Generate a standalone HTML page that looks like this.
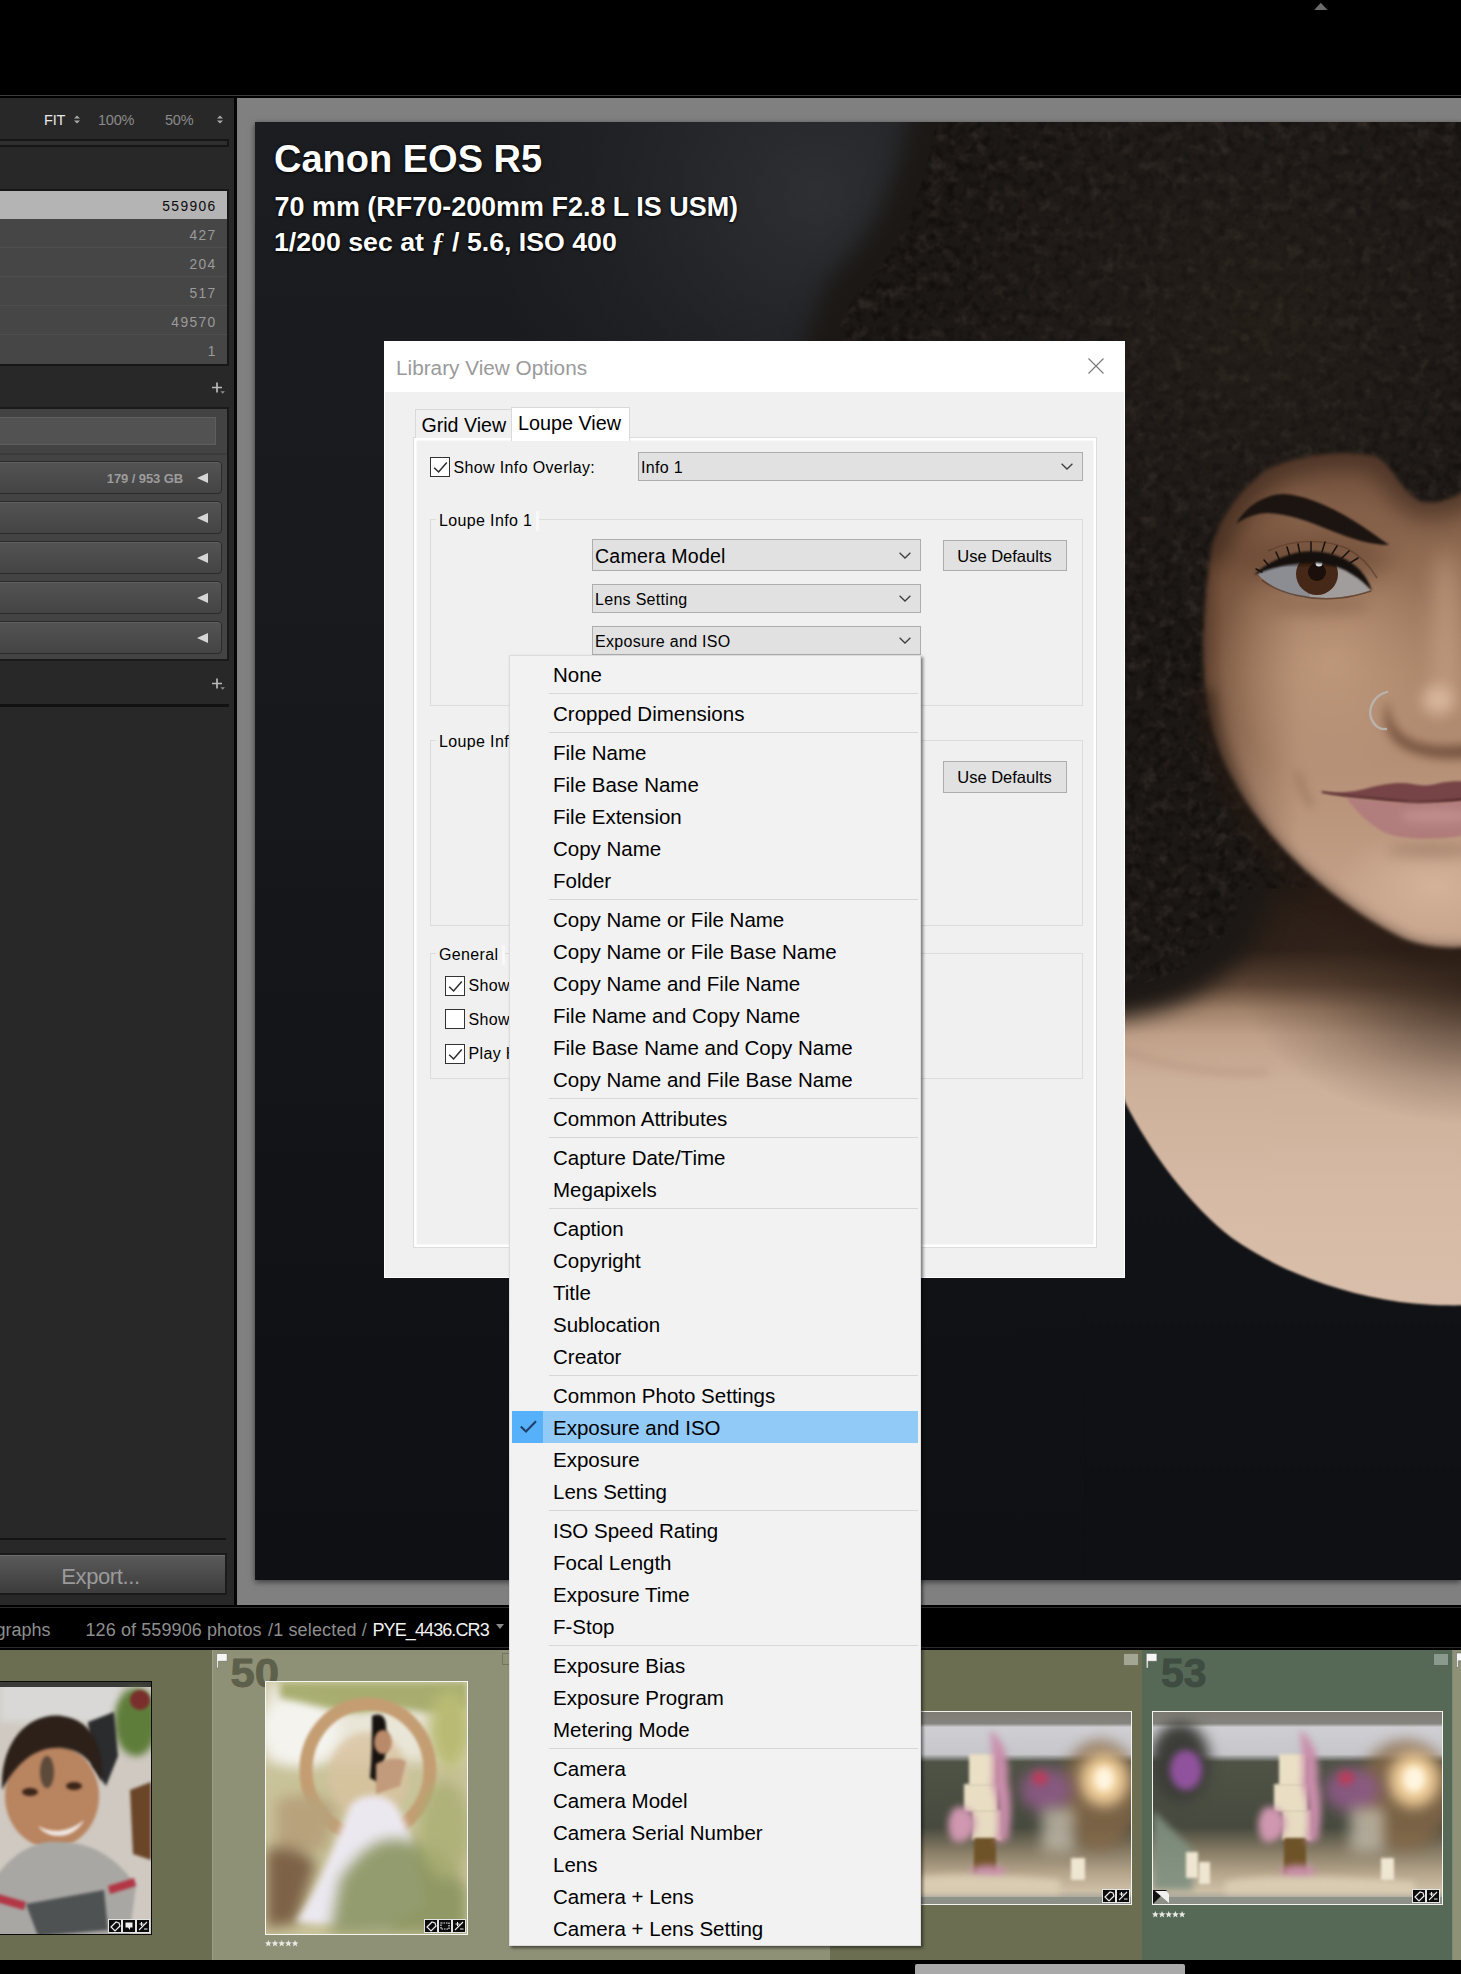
<!DOCTYPE html>
<html>
<head>
<meta charset="utf-8">
<title>Library View Options</title>
<style>
*{box-sizing:border-box;margin:0;padding:0}
html,body{width:1461px;height:1974px;overflow:hidden;background:#000}
body{position:relative;font-family:"Liberation Sans",sans-serif;color:#000}
.abs{position:absolute}
#app{position:absolute;left:0;top:0;width:1461px;height:1974px;overflow:hidden;background:#000}

/* ---------- top bar ---------- */
#topline{left:0;top:95px;width:1461px;height:1px;background:#3c3c3c}

/* ---------- left panel ---------- */
#left{left:0;top:98px;width:234px;height:1507px;background:#282828}
#leftedge{left:234px;top:98px;width:3px;height:1507px;background:#050505}
.zoomtxt{top:14px;font-size:14.5px;color:#8a8a8a;line-height:16px;letter-spacing:-.2px}
.spin{width:6px;height:9px}
#zbar{left:-2px;top:41px;width:231px;height:8px;border:2px solid #161616;background:#2e2e2e}
#catlist{left:-2px;top:91px;width:231px;height:177px;border:2px solid #171717;background:#464646}
.row{position:absolute;left:0;width:227px;height:28px;background:#464646;color:#9b9b9b;font-size:13.8px;line-height:31px;text-align:right;padding-right:10.3px;letter-spacing:1.4px;border-bottom:1px solid #4e4e4e;overflow:hidden}
.row.cur{background:#b4b4b4;color:#0a0a0a;border-bottom-color:#b4b4b4}
.plus{width:14px;height:14px}
#pan2{left:-2px;top:309px;width:231px;height:254px;border:2px solid #1a1a1a;background:#434343}
#search{left:-2px;top:8px;width:218px;height:28px;background:#525252;border:1px solid #5e5e5e}
#pan2sep{left:0;top:44px;width:227px;height:2px;background:#3b3b3b}
.vol{position:absolute;left:-6px;width:228px;height:33px;border:1px solid #2b2b2b;border-radius:4px;background:linear-gradient(#535353,#444);box-shadow:inset 0 1px 0 #606060}
.vol i{position:absolute;right:13px;top:11px;width:0;height:0;border-top:5.5px solid transparent;border-bottom:5.5px solid transparent;border-right:11px solid #d6d6d6}
.vol b{position:absolute;right:38px;top:9px;font-size:13px;line-height:15px;color:#9c9c9c;font-weight:700;letter-spacing:-.1px}
#line704{left:0;top:606px;width:229px;height:3px;background:#111}
#line1539{left:0;top:1440px;width:226px;height:2px;background:#141414}
#export{left:-2px;top:1455px;width:229px;height:42px;border:2px solid #1b1b1b;background:linear-gradient(#5a5a5a,#3c3c3c);color:#9a9a9a;font-size:22px;letter-spacing:-.4px;line-height:43px;text-align:center;padding-right:24px;box-shadow:inset 0 1px 0 #6c6c6c;overflow:hidden}

/* ---------- loupe area ---------- */
#gray{left:237px;top:98px;width:1224px;height:1507px;background:#808080}
#photo{left:255px;top:122px;width:1206px;height:1458px;background:#1a1b1d;overflow:hidden;box-shadow:0 2px 6px rgba(0,0,0,.55)}
.ov{position:absolute;left:20px;color:#fff;font-weight:700;white-space:nowrap;text-shadow:0 1px 3px rgba(0,0,0,.9),0 0 2px rgba(0,0,0,.8)}

/* ---------- bottom ---------- */
#infobar{left:0;top:1605px;width:1461px;height:45px;background:#000;color:#8e8e8e;font-size:18px;line-height:22px;white-space:nowrap}
#film{left:0;top:1650px;width:1461px;height:310px;background:#6f7158;overflow:hidden}
#thumbbar{left:915px;top:1964px;width:270px;height:12px;background:#a9a9a9;border-radius:2px 2px 0 0}

/* ---------- dialog ---------- */
#dlg{left:384px;top:341px;width:741px;height:937px;background:#f0f0f0;box-shadow:inset 0 0 0 1px #fff;font-size:16px;overflow:hidden}
#dlg .tbar{left:0;top:0;width:741px;height:51px;background:#fff}
#dlg .ttl{left:12px;top:12.5px;font-size:20.75px;line-height:28px;color:#9a9a9a;white-space:nowrap}
.tab{position:absolute;border:1px solid #d9d9d9;border-bottom:0;font-size:19.6px;line-height:24px;white-space:nowrap}
#tabpanel{left:29px;top:96px;width:684px;height:811px;border:1px solid #dcdcdc;box-shadow:inset 0 0 0 2.5px #fff;background:#f0f0f0}
.cb{position:absolute;width:20px;height:20px;border:1px solid #333;background:#fff}
.cb svg{position:absolute;left:0;top:0;width:18px;height:18px}
.lbl{position:absolute;font-size:16px;line-height:20px;white-space:nowrap;color:#000;letter-spacing:.36px}
.sel{position:absolute;background:#e1e1e1;border:1px solid #adadad;font-size:16px;white-space:nowrap;padding-left:2.5px;color:#000;letter-spacing:.3px}
.sel svg{position:absolute;right:9px;top:50%;margin-top:-3px;width:12px;height:7px}
.grp{position:absolute;border:1px solid #dcdcdc}
.grp>span{position:absolute;left:5px;top:-9px;padding:0 4px 0 3px;background:#f0f0f0;font-size:16px;line-height:20px;white-space:nowrap;box-shadow:3px 0 0 #f8f8f8;letter-spacing:.36px}
.btn{position:absolute;background:#e1e1e1;border:1px solid #adadad;font-size:16.5px;text-align:center;white-space:nowrap}

/* ---------- menu ---------- */
#menu{left:509px;top:655px;width:412px;height:1291px;background:#f2f2f2;border:1px solid #dcdcdc;padding:3px 2px;box-shadow:2px 2px 3px rgba(0,0,0,.5);font-size:20.5px;color:#000}
.mi{position:relative;height:32px;line-height:32.4px;padding-left:41px;white-space:nowrap;overflow:hidden}
.mi.on{overflow:visible;z-index:1}
.mi.on u{position:absolute;left:0;top:-.8px;width:406px;height:31.4px;background:linear-gradient(90deg,#56b0fa 0,#56b0fa 31px,#91c9f7 31px);z-index:-1}
.mi.on svg{position:absolute;left:8px;top:8px;width:17px;height:14px}
#menu hr{border:0;height:1px;background:#d7d7d7;margin:2px 0 4px 37px}
</style>
</head>
<body>
<div id="app">

<!-- top bar -->
<div class="abs" id="topline"></div>
<svg class="abs" style="left:1313px;top:2px" width="16" height="9" viewBox="0 0 16 9"><path d="M1.2 7.9 L7.8 0.7 L14.6 7.9Z" fill="#6c6c6c"/></svg>

<!-- loupe area -->
<div class="abs" id="gray"></div>
<div class="abs" id="photo">
<!--PHOTO-START--><svg class="abs" style="left:0;top:0" width="1206" height="1458" viewBox="255 122 1206 1458" preserveAspectRatio="none">
<defs>
  <linearGradient id="bgv" x1="0" y1="122" x2="0" y2="1580" gradientUnits="userSpaceOnUse">
    <stop offset="0" stop-color="#1c1d20"/><stop offset=".45" stop-color="#17181b"/><stop offset=".8" stop-color="#111215"/><stop offset="1" stop-color="#0f1013"/>
  </linearGradient>
  <radialGradient id="glow" cx="815" cy="195" r="330" gradientUnits="userSpaceOnUse" gradientTransform="translate(815 195) scale(1 .95) translate(-815 -195)">
    <stop offset="0" stop-color="#323438" stop-opacity=".8"/><stop offset=".35" stop-color="#2e3034" stop-opacity=".55"/><stop offset=".7" stop-color="#2a2c30" stop-opacity=".25"/><stop offset="1" stop-color="#2a2c31" stop-opacity="0"/>
  </radialGradient>
  <linearGradient id="neck" x1="0" y1="860" x2="0" y2="1310" gradientUnits="userSpaceOnUse">
    <stop offset="0" stop-color="#241913"/><stop offset=".2" stop-color="#2e2119"/><stop offset=".278" stop-color="#5e4636"/><stop offset=".333" stop-color="#a08169"/><stop offset=".389" stop-color="#c0a089"/><stop offset=".49" stop-color="#cdb09a"/><stop offset=".755" stop-color="#d6baa5"/><stop offset="1" stop-color="#d9bfab"/>
  </linearGradient>
  <radialGradient id="neckshade" cx="1480" cy="985" r="240" gradientUnits="userSpaceOnUse" gradientTransform="translate(1480 985) scale(1 .583) translate(-1480 -985)">
    <stop offset="0" stop-color="#2c1f17" stop-opacity=".85"/><stop offset=".4" stop-color="#2f2118" stop-opacity=".5"/><stop offset=".7" stop-color="#3a281d" stop-opacity=".22"/><stop offset="1" stop-color="#3a281d" stop-opacity="0"/>
  </radialGradient>
  <linearGradient id="face" x1="0" y1="450" x2="0" y2="945" gradientUnits="userSpaceOnUse">
    <stop offset="0" stop-color="#6f4e3a"/><stop offset=".12" stop-color="#835f48"/><stop offset=".28" stop-color="#987258"/><stop offset=".45" stop-color="#aa8468"/><stop offset=".7" stop-color="#b9947b"/><stop offset="1" stop-color="#c8a68e"/>
  </linearGradient>
  <linearGradient id="faceL" x1="1198" y1="0" x2="1300" y2="0" gradientUnits="userSpaceOnUse">
    <stop offset="0" stop-color="#3c2518" stop-opacity=".85"/><stop offset=".25" stop-color="#553623" stop-opacity=".5"/><stop offset="1" stop-color="#6a452f" stop-opacity="0"/>
  </linearGradient>
  <radialGradient id="cheekhi" cx="1332" cy="660" r="115" gradientUnits="userSpaceOnUse">
    <stop offset="0" stop-color="#d0a98c" stop-opacity=".55"/><stop offset="1" stop-color="#d2aa8d" stop-opacity="0"/>
  </radialGradient>
  <radialGradient id="chinhi" cx="1435" cy="885" r="100" gradientUnits="userSpaceOnUse" gradientTransform="translate(1435 885) scale(1 .6) translate(-1435 -885)">
    <stop offset="0" stop-color="#dcbba3" stop-opacity=".7"/><stop offset="1" stop-color="#dcbba3" stop-opacity="0"/>
  </radialGradient>
  <radialGradient id="hairhi" cx="1260" cy="320" r="340" gradientUnits="userSpaceOnUse">
    <stop offset="0" stop-color="#30281f" stop-opacity=".4"/><stop offset=".6" stop-color="#2c2521" stop-opacity=".2"/><stop offset="1" stop-color="#2c2521" stop-opacity="0"/>
  </radialGradient>
  <filter color-interpolation-filters="sRGB" id="b8" x="-60%" y="-300%" width="220%" height="700%"><feGaussianBlur stdDeviation="7"/></filter>
  <filter color-interpolation-filters="sRGB" id="b5" x="-60%" y="-200%" width="220%" height="500%"><feGaussianBlur stdDeviation="4"/></filter>
  <filter color-interpolation-filters="sRGB" id="b3" x="-10%" y="-10%" width="120%" height="120%"><feGaussianBlur stdDeviation="2.2"/></filter>
  <filter color-interpolation-filters="sRGB" id="b1" x="-20%" y="-20%" width="140%" height="140%"><feGaussianBlur stdDeviation="1"/></filter>
  <filter color-interpolation-filters="sRGB" id="b12" x="-80%" y="-80%" width="260%" height="260%"><feGaussianBlur stdDeviation="11"/></filter>
  <filter color-interpolation-filters="sRGB" id="curl" x="0" y="0" width="100%" height="100%">
    <feTurbulence type="fractalNoise" baseFrequency=".07" numOctaves="3" seed="11" result="n"/>
    <feColorMatrix in="n" type="matrix" values="0 0 0 0 .27  0 0 0 0 .235  0 0 0 0 .215  2.4 0 0 0 -1.2"/>
    <feComposite in2="SourceGraphic" operator="in"/>
  </filter>
  <filter color-interpolation-filters="sRGB" id="curld" x="0" y="0" width="100%" height="100%">
    <feTurbulence type="fractalNoise" baseFrequency=".11" numOctaves="2" seed="23" result="n"/>
    <feColorMatrix in="n" type="matrix" values="0 0 0 0 .04  0 0 0 0 .03  0 0 0 0 .025  0 2.6 0 0 -1.15"/>
    <feComposite in2="SourceGraphic" operator="in"/>
  </filter>
  <clipPath id="pc"><rect x="255" y="122" width="1206" height="1458"/></clipPath>
  <path id="facep" d="M1480 452 L1480 946 C1450 950 1428 948 1406 940 C1366 922 1322 888 1292 858 C1256 822 1233 786 1219 750 C1206 715 1201 670 1204 620 C1206 590 1208 570 1212 546 C1220 516 1240 490 1266 470 C1296 455 1340 449 1376 456 C1392 464 1400 490 1420 501 C1440 506 1456 496 1480 484Z"/>
  <clipPath id="fc"><use href="#facep"/></clipPath>
  <clipPath id="eyec"><path d="M1258 574 C1276 562 1300 553 1326 556 C1348 560 1362 574 1371 591 C1352 596 1330 600 1308 598 C1288 596 1270 588 1258 574Z"/></clipPath>
</defs>
<g clip-path="url(#pc)">
  <rect x="255" y="122" width="1206" height="1458" fill="url(#bgv)"/>
  <rect x="400" y="100" width="760" height="600" fill="url(#glow)"/>
  <!-- neck / chest -->
  <rect x="1100" y="860" width="380" height="470" fill="url(#neck)"/>
  <rect x="1180" y="820" width="300" height="380" fill="url(#neckshade)"/>
  <path d="M1120 1050 C1170 1068 1220 1075 1268 1072" fill="none" stroke="#a98670" stroke-width="5" opacity=".5" filter="url(#b5)"/>
  <!-- shirt -->
  <path d="M1085 990 L1125 1102 C1150 1152 1190 1206 1232 1238 C1282 1273 1340 1293 1400 1302 C1425 1305 1445 1306 1475 1305 L1475 1600 L1085 1600Z" fill="url(#bgv)" filter="url(#b1)"/>
  <!-- hair -->
  <g filter="url(#b12)">
  <path d="M915 90 C900 185 872 238 838 268 C812 300 800 360 795 425 C786 520 792 700 832 860 C872 960 962 1022 1062 1022 C1125 1022 1172 1010 1202 990 C1246 962 1264 930 1270 890 L1480 860 L1480 90Z" fill="#1c1815"/>
  </g>
  <path d="M940 100 C925 195 898 250 864 284 C838 312 826 366 821 430 C812 520 818 695 856 842 C892 934 970 992 1062 992 C1118 992 1160 982 1186 966 C1222 942 1240 918 1244 890 L1480 880 L1480 100Z" fill="#fff" filter="url(#curl)" opacity=".5"/>
  <path d="M940 100 C925 195 898 250 864 284 C838 312 826 366 821 430 C812 520 818 695 856 842 C892 934 970 992 1062 992 C1118 992 1160 982 1186 966 C1222 942 1240 918 1244 890 L1480 880 L1480 100Z" fill="#fff" filter="url(#curld)" opacity=".55"/>
  <path d="M960 122 C940 210 900 270 880 300 C860 400 900 560 1000 640 L1480 700 L1480 122Z" fill="url(#hairhi)"/>
  <!-- face -->
  <g filter="url(#b3)"><g clip-path="url(#fc)">
    <use href="#facep" fill="url(#face)"/>
    <rect x="1190" y="440" width="120" height="520" fill="url(#faceL)"/>
    <ellipse cx="1332" cy="660" rx="115" ry="115" fill="url(#cheekhi)"/>
    <ellipse cx="1435" cy="885" rx="100" ry="60" fill="url(#chinhi)"/>
    <!-- forehead shade under hair -->
    <path d="M1210 560 C1220 516 1240 488 1266 470 C1296 455 1340 449 1376 456 C1392 464 1400 490 1420 501 C1440 506 1456 496 1480 484" fill="none" stroke="#2a1a12" stroke-width="34" opacity=".5" filter="url(#b12)"/>
    <!-- eye socket shade -->
    <ellipse cx="1312" cy="560" rx="76" ry="26" fill="#5a3a28" opacity=".45" filter="url(#b12)"/>
    <ellipse cx="1318" cy="606" rx="52" ry="9" fill="#7a5640" opacity=".4" filter="url(#b8)"/>
    <!-- nose -->
    <ellipse cx="1446" cy="630" rx="12" ry="80" fill="#dcb89c" opacity=".5" filter="url(#b12)"/>
    <ellipse cx="1438" cy="700" rx="16" ry="15" fill="#e6c6ad" opacity=".7" filter="url(#b8)"/>
    <path d="M1388 700 C1388 724 1402 740 1424 744 C1444 748 1462 746 1480 742 L1480 756 C1450 762 1416 758 1398 744 C1384 732 1382 714 1388 700Z" fill="#5b3a29" opacity=".7" filter="url(#b5)"/>
    <path d="M1298 772 C1300 784 1304 796 1312 806" fill="none" stroke="#7b5742" stroke-width="5" opacity=".5" filter="url(#b5)"/>
  </g></g>
  <path d="M1204 690 C1214 760 1244 828 1290 868 C1324 900 1368 932 1408 950 C1434 958 1460 958 1490 954" fill="none" stroke="#2a1c14" stroke-width="20" opacity=".6" filter="url(#b8)"/>
  <path d="M1387 692 C1374 695 1368 708 1371 718 C1374 726 1380 730 1386 729" fill="none" stroke="#b9b3ad" stroke-width="2.3" stroke-linecap="round"/>
  <!-- brow -->
  <path d="M1236 524 C1246 505 1266 494 1284 494 C1312 496 1340 512 1362 526 C1374 534 1382 540 1389 545 C1370 545 1350 538 1332 531 C1310 522 1290 514 1268 513 C1256 513 1246 517 1236 524Z" fill="#1c1410" filter="url(#b1)"/>
  <!-- eye -->
  <g clip-path="url(#eyec)">
    <rect x="1250" y="545" width="130" height="60" fill="#a19d9c"/>
    <rect x="1250" y="545" width="60" height="60" fill="#8b8d92"/>
    <circle cx="1317" cy="574" r="21" fill="#452817"/>
    <circle cx="1317" cy="572" r="9" fill="#1a0f0a"/>
    <rect x="1250" y="545" width="130" height="20" fill="#120c09" opacity=".55" filter="url(#b3)"/>
    <circle cx="1319" cy="563" r="3.5" fill="#dfe3ea"/>
  </g>
  <path d="M1254 575 C1262 566 1280 556 1300 552 C1324 549 1346 556 1360 570 C1366 577 1370 584 1372 591 C1360 578 1346 568 1326 564 C1300 560 1276 566 1254 575Z" fill="#15100d" filter="url(#b1)"/>
  <path d="M1262 580 C1280 594 1310 601 1340 598 C1352 597 1362 594 1371 591" fill="none" stroke="#5a3c2b" stroke-width="1.6" opacity=".8"/>
  <path d="M1268 551 C1290 540 1322 538 1346 548 C1360 555 1370 566 1377 578" fill="none" stroke="#5c3d2b" stroke-width="1.5" opacity=".7"/>
  <g stroke="#17110e" stroke-width="1.5" fill="none" stroke-linecap="round">
    <path d="M1262 572l-6-3M1270 567l-6-7M1280 561l-4-9M1290 557l-3-10M1300 554l-2-10M1311 552l0-10M1322 552l3-10M1332 554l5-8M1342 558l7-7M1350 563l8-5"/>
  </g>
  <!-- lips -->
  <path d="M1318 791 C1340 794 1356 792 1372 787 C1390 783 1402 782 1412 784 C1422 786 1430 786 1440 783 C1450 781 1460 781 1480 782 L1480 800 C1440 804 1400 803 1372 799 C1350 797 1335 795 1318 791Z" fill="#764446" filter="url(#b1)"/>
  <path d="M1346 797 C1380 803 1430 805 1480 799 L1480 832 C1450 840 1412 840 1391 835 C1372 828 1356 812 1346 797Z" fill="#b27d7d" filter="url(#b1)"/>
  <ellipse cx="1436" cy="816" rx="36" ry="7" fill="#c99696" opacity=".6" filter="url(#b5)"/>
  <path d="M1322 792 C1345 797 1372 798 1411 802 C1436 803 1456 800 1480 797" fill="none" stroke="#4a2426" stroke-width="2.2" opacity=".75" filter="url(#b1)"/>
  <ellipse cx="1432" cy="850" rx="46" ry="7" fill="#7d5a46" opacity=".4" filter="url(#b8)"/>
</g>
</svg>
<!--PHOTO-END-->
<div class="ov" style="top:14px;left:19px;font-size:38px;line-height:46px">Canon EOS R5</div>
<div class="ov" style="top:68.5px;left:19.5px;font-size:26.95px;line-height:32px">70 mm (RF70-200mm F2.8 L IS USM)</div>
<div class="ov" style="top:104px;left:19px;font-size:26.7px;line-height:32px">1/200 sec at <i style="font-family:'Liberation Serif',serif">ƒ</i> / 5.6, ISO 400</div>
</div>

<!-- left panel -->
<div class="abs" id="left">
  <div class="abs zoomtxt" style="left:44px;color:#e8e8e8">FIT</div>
  <div class="abs zoomtxt" style="left:98px">100%</div>
  <div class="abs zoomtxt" style="left:165px">50%</div>
  <svg class="abs spin" style="left:74px;top:17px" viewBox="0 0 6 9"><path d="M0 3.6L3 0.4L6 3.6ZM0 5.4L3 8.6L6 5.4Z" fill="#a8a8a8"/></svg>
  <svg class="abs spin" style="left:217px;top:17px" viewBox="0 0 6 9"><path d="M0 3.6L3 0.4L6 3.6ZM0 5.4L3 8.6L6 5.4Z" fill="#a8a8a8"/></svg>
  <div class="abs" id="zbar"></div>
  <div class="abs" id="catlist">
    <div class="row cur" style="top:0">559906</div>
    <div class="row" style="top:29px">427</div>
    <div class="row" style="top:58px">204</div>
    <div class="row" style="top:87px">517</div>
    <div class="row" style="top:116px">49570</div>
    <div class="row" style="top:145px;height:28px;border-bottom:0">1</div>
  </div>
  <svg class="abs plus" style="left:211px;top:283px" viewBox="0 0 14 14"><path d="M1 6.5H11M6 1.5V11.5" stroke="#b9b9b9" stroke-width="1.7" fill="none"/><path d="M9.5 10.2h4.4l-2.2 2.6z" fill="#8c8c8c"/></svg>
  <div class="abs" id="pan2">
    <div class="abs" id="search"></div>
    <div class="abs" id="pan2sep"></div>
    <div class="vol" style="top:52px"><b>179 / 953 GB</b><i></i></div>
    <div class="vol" style="top:92px"><i></i></div>
    <div class="vol" style="top:132px"><i></i></div>
    <div class="vol" style="top:172px"><i></i></div>
    <div class="vol" style="top:212px"><i></i></div>
  </div>
  <svg class="abs plus" style="left:211px;top:579px" viewBox="0 0 14 14"><path d="M1 6.5H11M6 1.5V11.5" stroke="#b9b9b9" stroke-width="1.7" fill="none"/><path d="M9.5 10.2h4.4l-2.2 2.6z" fill="#8c8c8c"/></svg>
  <div class="abs" id="line704"></div>
  <div class="abs" id="line1539"></div>
  <div class="abs" id="export">Export...</div>
</div>
<div class="abs" id="leftedge"></div>

<!-- info bar -->
<div class="abs" id="infobar">
  <div class="abs" style="left:0;top:2px;width:1461px;height:1px;background:#2b2b2b"></div>
  <div class="abs" style="left:0;top:42px;width:1461px;height:1px;background:#2b2b2b"></div>
  <span class="abs" style="left:-4.5px;top:14px">graphs</span>
  <span class="abs" style="left:85.5px;top:14px;letter-spacing:.1px">126 of 559906 photos</span>
  <span class="abs" style="left:268px;top:14px;letter-spacing:.15px">/1 selected /</span>
  <span class="abs" style="left:372.5px;top:14px;color:#f2f2f2;letter-spacing:-.9px">PYE_4436.CR3</span>
  <svg class="abs" style="left:496px;top:19px" width="8" height="5" viewBox="0 0 8 5"><path d="M0 0h8L4 5z" fill="#8a8a8a"/></svg>
</div>

<!-- filmstrip -->
<div class="abs" id="film">
<!--FILM-START--><div class="abs" style="left:0;top:0;width:212px;height:310px;background:#6c6e52"></div>
<div class="abs" style="left:212px;top:0;width:1px;height:310px;background:#9b9f88"></div>
<div class="abs" style="left:213px;top:0;width:617px;height:310px;background:#8f9177"></div>
<div class="abs" style="left:830px;top:0;width:312px;height:310px;background:#6c6e52"></div>
<div class="abs" style="left:1142px;top:0;width:310px;height:310px;background:#566957"></div>
<div class="abs" style="left:1452px;top:0;width:1px;height:310px;background:#7c8a7a"></div>
<div class="abs" style="left:1453px;top:0;width:8px;height:310px;background:#8f9177"></div>

<svg class="abs" style="left:0;top:0" width="1461" height="310" viewBox="0 1650 1461 310">
<defs>
  <filter id="f4" color-interpolation-filters="sRGB" x="-50%" y="-50%" width="200%" height="200%"><feGaussianBlur stdDeviation="3.5"/></filter>
  <filter id="f2" color-interpolation-filters="sRGB" x="-50%" y="-50%" width="200%" height="200%"><feGaussianBlur stdDeviation="1.6"/></filter>
  <filter id="f8" color-interpolation-filters="sRGB" x="-50%" y="-50%" width="200%" height="200%"><feGaussianBlur stdDeviation="7"/></filter>
  <clipPath id="c1"><rect x="0" y="1682" width="151" height="252"/></clipPath>
  <clipPath id="c2"><rect x="266" y="1682" width="201" height="252"/></clipPath>
  <clipPath id="c3"><rect x="900" y="1712" width="231" height="192"/></clipPath>
  <clipPath id="c4"><rect x="1153" y="1712" width="289" height="192"/></clipPath>
  <linearGradient id="cakebg" x1="0" y1="1712" x2="0" y2="1904" gradientUnits="userSpaceOnUse">
    <stop offset="0" stop-color="#7d7b74"/><stop offset=".06" stop-color="#86847e"/><stop offset=".08" stop-color="#cfcfd3"/><stop offset=".22" stop-color="#c6c6cb"/><stop offset=".26" stop-color="#4f5346"/><stop offset=".6" stop-color="#474a3e"/><stop offset=".72" stop-color="#857a64"/><stop offset=".84" stop-color="#b5a58b"/><stop offset=".93" stop-color="#cdbfa6"/><stop offset="1" stop-color="#8d9190"/>
  </linearGradient>
  <g id="badge"><rect x="0" y="0" width="14" height="14" fill="#0c0c0c"/><rect x=".5" y=".5" width="13" height="13" fill="none" stroke="#e4e4e4" stroke-width="1"/></g>
  <path id="flag" d="M0 0h10.6v7.8H1.8v6.8H0z" fill="#f6f6f6" stroke="#55584a" stroke-width=".5"/>
  <path id="star" d="M3.3 0l.9 2.2 2.4.2-1.8 1.6.6 2.4L3.3 5.1 1.2 6.4l.6-2.4L0 2.4l2.4-.2z" fill="#e9e9e4"/>
</defs>

<!-- photo 1 : boy -->
<rect x="-1" y="1681" width="153" height="254" fill="#0b0b0b"/>
<g clip-path="url(#c1)">
  <rect x="0" y="1682" width="151" height="252" fill="#cfc9c1"/>
  <rect x="0" y="1682" width="120" height="40" fill="#d9d8d6" filter="url(#f4)"/>
  <rect x="0" y="1682" width="151" height="5" fill="#3a3a38"/>
  <ellipse cx="136" cy="1722" rx="22" ry="34" fill="#5f7d3a" filter="url(#f4)"/>
  <ellipse cx="140" cy="1700" rx="10" ry="10" fill="#7a2f2c" filter="url(#f2)"/>
  <path d="M88 1722l26-10 4 44-12 30-14-20z" fill="#2b2c2e" filter="url(#f2)"/>
  <path d="M130 1790l21-8v78l-18-6z" fill="#6a4528" filter="url(#f2)"/>
  <ellipse cx="52" cy="1796" rx="47" ry="52" fill="#b98460" filter="url(#f2)"/>
  <path d="M2 1790C0 1740 30 1712 62 1716c30 4 42 30 40 66-10-22-22-32-40-34-24-2-44 12-60 42z" fill="#2c2019" filter="url(#f2)"/>
  <ellipse cx="47" cy="1772" rx="7" ry="16" fill="#5c4a3a" filter="url(#f2)"/>
  <ellipse cx="30" cy="1792" rx="8" ry="4" fill="#3a2418" filter="url(#f2)"/><ellipse cx="74" cy="1786" rx="8" ry="4" fill="#3a2418" filter="url(#f2)"/>
  <path d="M38 1826c14 8 32 6 46-6-8 18-34 22-46 6z" fill="#f0e8e4" filter="url(#f2)"/>
  <path d="M-6 1880c20-30 44-40 66-38 30 0 56 14 76 44l-8 60H-6z" fill="#a9a7a3" filter="url(#f2)"/>
  <path d="M-2 1894l28 8-2 8-28-8zM108 1886l26-8 2 8-26 8z" fill="#b23645" filter="url(#f2)"/>
  <path d="M26 1904l78-14 4 40-70 6z" fill="#3f4446" opacity=".85" filter="url(#f2)"/>
</g>
<g transform="translate(108,1919)"><use href="#badge"/><path d="M3 8l5-5 3 1 1 3-5 5z" fill="none" stroke="#eee" stroke-width="1.2"/></g>
<g transform="translate(122,1919)"><use href="#badge"/><path d="M3.5 3.5h7v5h-2.5v2.5l-2-2.5h-2.5z" fill="#eee"/></g>
<g transform="translate(136,1919)"><use href="#badge"/><path d="M3 11L11 3M3.5 5h4M5.500 3v4M8 10h3.500" stroke="#eee" stroke-width="1.1" fill="none"/></g>

<!-- cell 2 : 50 -->
<use href="#flag" x="216.600" y="1653.500"/>
<text x="230.500" y="1687" font-family="Liberation Sans, sans-serif" font-weight="700" font-size="40.5" textLength="48.5" lengthAdjust="spacingAndGlyphs" fill="#5d604a" stroke="#5d604a" stroke-width=".9">50</text>
<rect x="265" y="1681" width="203" height="254" fill="#f6f6f2"/>
<g clip-path="url(#c2)">
  <rect x="266" y="1682" width="201" height="252" fill="#c9c39a"/>
  <rect x="266" y="1682" width="201" height="80" fill="#e9e6d8" filter="url(#f8)"/>
  <ellipse cx="300" cy="1730" rx="40" ry="36" fill="#f4f3ee" filter="url(#f8)"/>
  <path d="M280 1682h187v26c-30 14-60-4-90 2-30 8-60-6-97-12z" fill="#9da45e" opacity=".85" filter="url(#f4)"/>
  <ellipse cx="450" cy="1730" rx="22" ry="40" fill="#b9bb74" filter="url(#f8)"/>
  <ellipse cx="368" cy="1770" rx="62" ry="66" fill="none" stroke="#c49d72" stroke-width="13" filter="url(#f2)"/>
  <ellipse cx="368" cy="1776" rx="40" ry="44" fill="#d9c3a0" opacity=".8" filter="url(#f4)"/>
  <path d="M276 1800c30-10 50-4 60 10l-10 40-50 6z" fill="#b7a27c" filter="url(#f8)"/>
  <path d="M266 1850c20-6 40 0 50 14l-20 60-30 4z" fill="#7d6247" filter="url(#f8)"/>
  <path d="M350 1806c10-14 36-14 46 0 16 24 24 60 30 100l-40 22-90-6c20-30 36-70 54-116z" fill="#ece8f0" filter="url(#f4)"/>
  <path d="M372 1716c8-4 14 0 14 10 2 22-2 40-8 56l-8-4c2-20 2-42 2-62z" fill="#17120f" filter="url(#f2)"/>
  <ellipse cx="383" cy="1742" rx="9" ry="12" fill="#b98a6a" filter="url(#f2)"/>
  <path d="M376 1764c10-6 24-8 30-2l-6 24-24 8z" fill="#c29a7c" filter="url(#f2)"/>
  <path d="M340 1880c20-30 40-44 60-40 30 0 50 20 67 50v44H330z" fill="#8a9460" opacity=".9" filter="url(#f8)"/>
  <ellipse cx="445" cy="1830" rx="26" ry="50" fill="#a9ae72" opacity=".8" filter="url(#f8)"/>
</g>
<g transform="translate(424,1919)"><use href="#badge"/><path d="M3 8l5-5 3 1 1 3-5 5z" fill="none" stroke="#eee" stroke-width="1.2"/></g>
<g transform="translate(438,1919)"><use href="#badge"/><rect x="3" y="4" width="8" height="6" fill="none" stroke="#eee" stroke-width="1.2" stroke-dasharray="1.5 1"/></g>
<g transform="translate(452,1919)"><use href="#badge"/><path d="M3 11L11 3M3.5 5h4M5.500 3v4M8 10h3.500" stroke="#eee" stroke-width="1.1" fill="none"/></g>
<g transform="translate(265,1940)"><use href="#star"/><use href="#star" x="6.700"/><use href="#star" x="13.400"/><use href="#star" x="20.100"/><use href="#star" x="26.800"/></g>
<rect x="502.500" y="1653.500" width="9" height="11" fill="none" stroke="#555a48" stroke-width="1" stroke-dasharray="1 1"/>

<!-- cell 3 : cake -->
<rect x="899" y="1711" width="233" height="194" fill="#f4f4f0"/>
<g clip-path="url(#c3)">
  <rect x="900" y="1712" width="231" height="192" fill="url(#cakebg)"/>
  <ellipse cx="1100" cy="1795" rx="40" ry="55" fill="#8a6a48" opacity=".75" filter="url(#f8)"/>
  <ellipse cx="1104" cy="1780" rx="24" ry="26" fill="#f1cf9a" filter="url(#f8)"/>
  <ellipse cx="1104" cy="1779" rx="10" ry="12" fill="#fff6e0" filter="url(#f4)"/>
  <ellipse cx="1046" cy="1790" rx="26" ry="22" fill="#8d5a86" opacity=".9" filter="url(#f8)"/>
  <ellipse cx="1040" cy="1778" rx="8" ry="7" fill="#c23a56" opacity=".9" filter="url(#f4)"/>
  <rect x="1042" y="1808" width="32" height="44" fill="#c4bcac" opacity=".8" filter="url(#f8)"/>
  <rect x="969" y="1754" width="28" height="32" fill="#ebe0c6" filter="url(#f2)"/>
  <rect x="964" y="1784" width="34" height="28" fill="#e9dec4" filter="url(#f2)"/>
  <rect x="972" y="1810" width="30" height="30" fill="#e7dcc2" filter="url(#f2)"/>
  <rect x="974" y="1838" width="22" height="36" fill="#6f5328" filter="url(#f2)"/>
  <path d="M990 1730c14 10 20 30 18 50 4 20 4 40 0 60l-12 4c4-24 2-44-4-60 2-20 0-38-2-54z" fill="#c98daa" filter="url(#f4)"/>
  <path d="M954 1808c10-4 20 2 22 14 0 12-8 22-22 20-8-10-8-24 0-34z" fill="#cf97b0" filter="url(#f4)"/>
  <ellipse cx="988" cy="1872" rx="18" ry="7" fill="#c98daa" filter="url(#f4)"/>
  <path d="M900 1880c40-8 100-6 160 0v14H900z" fill="#d9ccb2" filter="url(#f4)"/>
  <rect x="1071" y="1858" width="14" height="22" fill="#efe6d2" filter="url(#f2)"/>
  <rect x="900" y="1897" width="231" height="7" fill="#8b8f86" opacity=".9"/>
</g>
<g transform="translate(1102,1889)"><use href="#badge"/><path d="M3 8l5-5 3 1 1 3-5 5z" fill="none" stroke="#eee" stroke-width="1.2"/></g>
<g transform="translate(1116,1889)"><use href="#badge"/><path d="M3 11L11 3M3.5 5h4M5.500 3v4M8 10h3.500" stroke="#eee" stroke-width="1.1" fill="none"/></g>
<rect x="1123.500" y="1653.500" width="15" height="12" fill="#a4a694" stroke="#555841" stroke-width="1" stroke-dasharray="1 1"/>

<!-- cell 4 : 53 -->
<use href="#flag" x="1146.300" y="1653.500"/>
<text x="1161" y="1687" font-family="Liberation Sans, sans-serif" font-weight="700" font-size="40.5" textLength="45.5" lengthAdjust="spacingAndGlyphs" fill="#3e4c41" stroke="#3e4c41" stroke-width=".9">53</text>
<rect x="1152" y="1711" width="291" height="194" fill="#f4f4f0"/>
<g clip-path="url(#c4)">
  <rect x="1153" y="1712" width="289" height="192" fill="url(#cakebg)"/>
  <ellipse cx="1180" cy="1762" rx="30" ry="40" fill="#3c3d38" filter="url(#f8)"/>
  <ellipse cx="1186" cy="1770" rx="16" ry="20" fill="#9a55a8" opacity=".9" filter="url(#f4)"/>
  <path d="M1153 1810l40 40v40h-40z" fill="#7f9080" opacity=".9" filter="url(#f4)"/>
  <ellipse cx="1405" cy="1795" rx="48" ry="55" fill="#8a6a48" opacity=".75" filter="url(#f8)"/>
  <ellipse cx="1414" cy="1780" rx="25" ry="27" fill="#f1cf9a" filter="url(#f8)"/>
  <ellipse cx="1414" cy="1779" rx="11" ry="13" fill="#fff6e0" filter="url(#f4)"/>
  <ellipse cx="1352" cy="1790" rx="28" ry="22" fill="#8d5a86" opacity=".9" filter="url(#f8)"/>
  <ellipse cx="1346" cy="1778" rx="8" ry="7" fill="#c23a56" opacity=".9" filter="url(#f4)"/>
  <rect x="1350" y="1808" width="34" height="44" fill="#c4bcac" opacity=".8" filter="url(#f8)"/>
  <rect x="1279" y="1754" width="28" height="32" fill="#ebe0c6" filter="url(#f2)"/>
  <rect x="1274" y="1784" width="34" height="28" fill="#e9dec4" filter="url(#f2)"/>
  <rect x="1282" y="1810" width="30" height="30" fill="#e7dcc2" filter="url(#f2)"/>
  <rect x="1284" y="1838" width="22" height="36" fill="#6f5328" filter="url(#f2)"/>
  <path d="M1300 1730c14 10 20 30 18 50 4 20 4 40 0 60l-12 4c4-24 2-44-4-60 2-20 0-38-2-54z" fill="#c98daa" filter="url(#f4)"/>
  <path d="M1264 1808c10-4 20 2 22 14 0 12-8 22-22 20-8-10-8-24 0-34z" fill="#cf97b0" filter="url(#f4)"/>
  <ellipse cx="1298" cy="1872" rx="18" ry="7" fill="#c98daa" filter="url(#f4)"/>
  <path d="M1225 1882c40-8 110-6 190 0v12h-190z" fill="#d9ccb2" filter="url(#f4)"/>
  <rect x="1186" y="1852" width="12" height="26" fill="#efe6d2" filter="url(#f2)"/><rect x="1199" y="1862" width="11" height="22" fill="#efe6d2" filter="url(#f2)"/>
  <rect x="1381" y="1858" width="13" height="22" fill="#efe6d2" filter="url(#f2)"/>
  <rect x="1153" y="1897" width="289" height="7" fill="#8b8f86" opacity=".9"/>
  <path d="M1153 1890h14l-14 14z" fill="#111"/><path d="M1155 1891h11l3 3v9z" fill="#f0f0f0"/>
</g>
<g transform="translate(1412,1889)"><use href="#badge"/><path d="M3 8l5-5 3 1 1 3-5 5z" fill="none" stroke="#eee" stroke-width="1.2"/></g>
<g transform="translate(1426,1889)"><use href="#badge"/><path d="M3 11L11 3M3.5 5h4M5.500 3v4M8 10h3.500" stroke="#eee" stroke-width="1.1" fill="none"/></g>
<g transform="translate(1152,1911)"><use href="#star"/><use href="#star" x="6.700"/><use href="#star" x="13.400"/><use href="#star" x="20.100"/><use href="#star" x="26.800"/></g>
<rect x="1433.500" y="1653.500" width="15" height="12" fill="#8a9a8c" stroke="#3b4a3e" stroke-width="1" stroke-dasharray="1 1"/>
<use href="#flag" x="1456.500" y="1653"/>
</svg>
<!--FILM-END-->
</div>
<div class="abs" id="thumbbar"></div>

<div class="abs" id="dlg">
  <div class="abs tbar"></div>
  <div class="abs ttl">Library View Options</div>
  <svg class="abs" style="left:704px;top:17px" width="16" height="16" viewBox="0 0 16 16"><path d="M0.5 0.5L15.5 15.5M15.5 0.5L0.5 15.5" stroke="#777" stroke-width="1.1" fill="none"/></svg>
  <div class="abs" id="tabpanel"></div>
  <div class="tab" style="left:31px;top:68px;width:97px;height:29px;background:#f0f0f0;padding:2.5px 0 0 5.5px">Grid View</div>
  <div class="tab" style="left:127px;top:65.5px;width:119px;height:34.5px;background:#fff;padding:3px 0 0 6px;font-size:19.8px">Loupe View</div>

  <div class="cb" style="left:45.5px;top:115.5px"><svg viewBox="0 0 18 18"><path d="M3.2 9.8L7.6 14L15.8 4.6" fill="none" stroke="#2b2b2b" stroke-width="1.5"/></svg></div>
  <div class="lbl" style="left:69.5px;top:117.0px">Show Info Overlay:</div>
  <div class="sel" style="left:253.5px;top:110.5px;width:445px;height:29px;line-height:29.5px">Info 1<svg viewBox="0 0 12 7"><path d="M0.6 0.7L6 6L11.4 0.7" fill="none" stroke="#3d3d3d" stroke-width="1.25"/></svg></div>

  <div class="grp" style="left:46px;top:177.5px;width:653px;height:187px"><span>Loupe Info 1</span></div>
  <div class="sel" style="left:207.5px;top:198px;width:329px;height:31.5px;line-height:32.5px;font-size:19.6px;letter-spacing:.17px">Camera Model<svg viewBox="0 0 12 7"><path d="M0.6 0.7L6 6L11.4 0.7" fill="none" stroke="#3d3d3d" stroke-width="1.25"/></svg></div>
  <div class="btn" style="left:558.5px;top:198.5px;width:124px;height:31.5px;line-height:31px">Use Defaults</div>
  <div class="sel" style="left:207.5px;top:242.5px;width:329px;height:29px;line-height:29.5px">Lens Setting<svg viewBox="0 0 12 7"><path d="M0.6 0.7L6 6L11.4 0.7" fill="none" stroke="#3d3d3d" stroke-width="1.25"/></svg></div>
  <div class="sel" style="left:207.5px;top:284.5px;width:329px;height:29px;line-height:29.5px">Exposure and ISO<svg viewBox="0 0 12 7"><path d="M0.6 0.7L6 6L11.4 0.7" fill="none" stroke="#3d3d3d" stroke-width="1.25"/></svg></div>

  <div class="grp" style="left:46px;top:399px;width:653px;height:186px"><span>Loupe Info 2</span></div>
  <div class="btn" style="left:558.5px;top:420px;width:124px;height:31.5px;line-height:31px">Use Defaults</div>

  <div class="grp" style="left:46px;top:612px;width:653px;height:126px"><span>General</span></div>
  <div class="cb" style="left:60.5px;top:634.5px"><svg viewBox="0 0 18 18"><path d="M3.2 9.8L7.6 14L15.8 4.6" fill="none" stroke="#2b2b2b" stroke-width="1.5"/></svg></div>
  <div class="lbl" style="left:84.5px;top:635.0px">Show</div>
  <div class="cb" style="left:60.5px;top:668px"></div>
  <div class="lbl" style="left:84.5px;top:669.0px">Show</div>
  <div class="cb" style="left:60.5px;top:702.5px"><svg viewBox="0 0 18 18"><path d="M3.2 9.8L7.6 14L15.8 4.6" fill="none" stroke="#2b2b2b" stroke-width="1.5"/></svg></div>
  <div class="lbl" style="left:84.5px;top:703.0px">Play H</div>
</div>

<div class="abs" id="menu">
<div class="mi">None</div>
<hr>
<div class="mi">Cropped Dimensions</div>
<hr>
<div class="mi">File Name</div>
<div class="mi">File Base Name</div>
<div class="mi">File Extension</div>
<div class="mi">Copy Name</div>
<div class="mi">Folder</div>
<hr>
<div class="mi">Copy Name or File Name</div>
<div class="mi">Copy Name or File Base Name</div>
<div class="mi">Copy Name and File Name</div>
<div class="mi">File Name and Copy Name</div>
<div class="mi">File Base Name and Copy Name</div>
<div class="mi">Copy Name and File Base Name</div>
<hr>
<div class="mi">Common Attributes</div>
<hr>
<div class="mi">Capture Date/Time</div>
<div class="mi">Megapixels</div>
<hr>
<div class="mi">Caption</div>
<div class="mi">Copyright</div>
<div class="mi">Title</div>
<div class="mi">Sublocation</div>
<div class="mi">Creator</div>
<hr>
<div class="mi">Common Photo Settings</div>
<div class="mi on"><u></u><svg viewBox="0 0 17 14"><path d="M0.8 6.4L6 11.4L16 1.2" fill="none" stroke="#1f4068" stroke-width="2.1"/></svg>Exposure and ISO</div>
<div class="mi">Exposure</div>
<div class="mi">Lens Setting</div>
<hr>
<div class="mi">ISO Speed Rating</div>
<div class="mi">Focal Length</div>
<div class="mi">Exposure Time</div>
<div class="mi">F-Stop</div>
<hr>
<div class="mi">Exposure Bias</div>
<div class="mi">Exposure Program</div>
<div class="mi">Metering Mode</div>
<hr>
<div class="mi">Camera</div>
<div class="mi">Camera Model</div>
<div class="mi">Camera Serial Number</div>
<div class="mi">Lens</div>
<div class="mi">Camera + Lens</div>
<div class="mi">Camera + Lens Setting</div>
</div>

</div>
</body>
</html>
